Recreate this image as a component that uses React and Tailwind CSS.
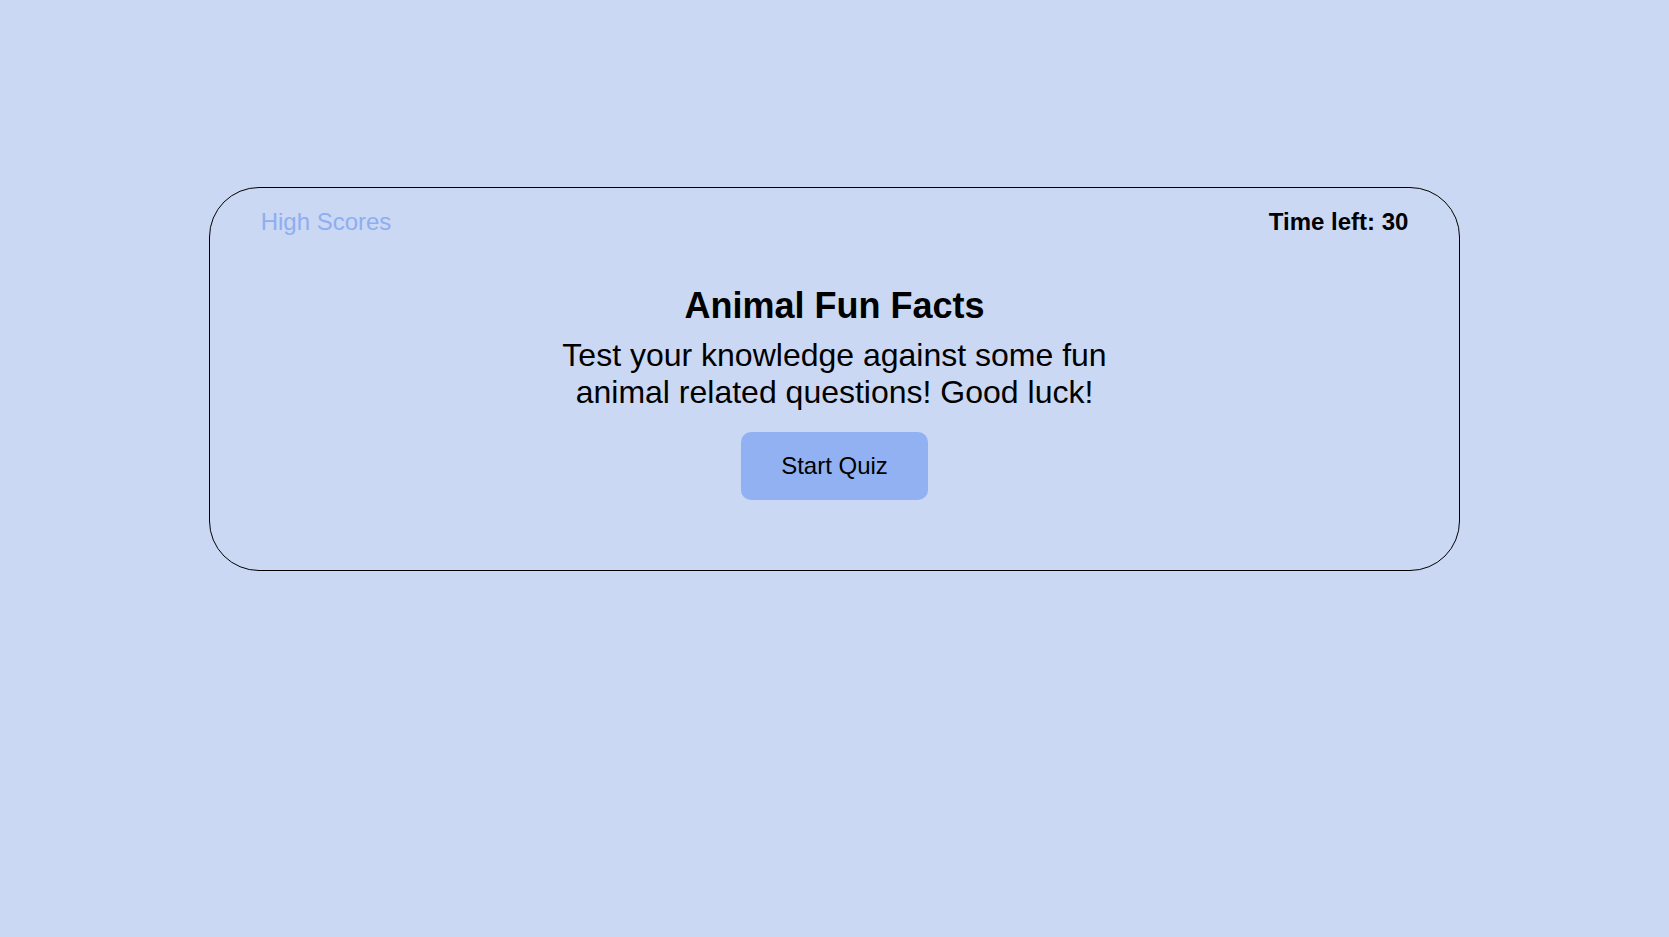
import React from 'react';

const App = () => {
  return (
    <div className="min-h-screen bg-[#cad8f4] pt-[187px] font-['Liberation_Sans',Arial,sans-serif] text-black">
      <div className="mx-auto w-[75%] rounded-[50px] border border-black pb-[70px]">
        <div className="flex justify-between px-[51px] pt-[20px] text-[24px] leading-[normal]">
          <a href="#" className="text-[#8eaef0]">High Scores</a>
          <span className="font-bold">Time left: 30</span>
        </div>

        <div className="flex flex-col items-center text-center">
          <h1 className="mt-[49px] text-[36px] font-bold leading-[normal]">Animal Fun Facts</h1>
          <p className="mt-[10px] max-w-[600px] text-[32px] leading-[normal]">
            Test your knowledge against some fun animal related questions! Good luck!
          </p>
          <button className="mt-[21px] rounded-[10px] bg-[#91b1f2] px-[40px] py-[20px] text-[24px] leading-[normal]">
            Start Quiz
          </button>
        </div>
      </div>
    </div>
  );
};

export default App;
